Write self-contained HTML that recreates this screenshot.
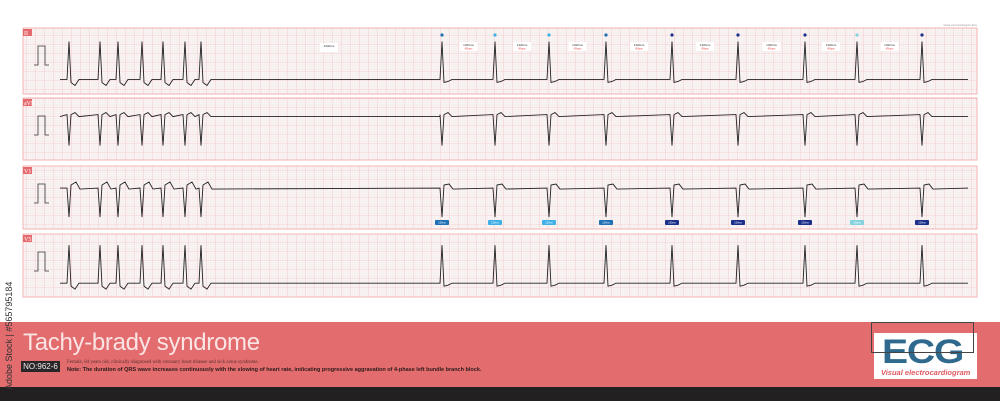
<!DOCTYPE html>
<html><head><meta charset="utf-8"><style>
body{margin:0;width:1000px;height:401px;overflow:hidden;background:#fff;font-family:"Liberation Sans",sans-serif;position:relative}
#ecg{position:absolute;left:0;top:0}
.banner{position:absolute;left:0;top:322px;width:1000px;height:65px;background:#e36c6e}
.dark{position:absolute;left:0;top:387px;width:1000px;height:14px;background:#232021}
.title{position:absolute;left:23px;top:329px;font-size:24px;color:#fbe4e4;letter-spacing:-0.3px}
.no{position:absolute;left:21px;top:361px;width:39px;height:11px;background:#2a2526;color:#eee;font-size:8px;line-height:11px;text-align:center}
.t1{position:absolute;left:67px;top:360px;font-size:5px;color:#5a3030;font-family:"Liberation Serif",serif}
.t2{position:absolute;left:67px;top:367px;font-size:5.5px;color:#2a1a1a;font-weight:bold}
.logo{position:absolute;left:874px;top:333px;width:103px;height:46px;background:#fff}
.logo .e{position:absolute;left:8px;top:2px;font-size:34px;font-weight:bold;color:#2f6a8e;line-height:34px;transform:scaleX(1.15);transform-origin:0 0;letter-spacing:-1px}
.logo .v{position:absolute;left:7px;top:35px;font-size:7.5px;color:#e05a60;font-style:italic;font-weight:bold}
.frame{position:absolute;left:871px;top:322px;width:101px;height:29px;border:1px solid #444}
.side{position:absolute;left:4px;top:390px;transform-origin:0 0;transform:rotate(-90deg);font-size:9px;color:#333;white-space:nowrap;z-index:5}
</style></head><body>
<svg id="ecg" width="1000" height="320" xmlns="http://www.w3.org/2000/svg"></svg>
<div class="banner"></div><div class="dark"></div>
<div class="title">Tachy-brady syndrome</div>
<div class="no">NO:962-6</div>
<div class="t1">Female, 84 years old, clinically diagnosed with coronary heart disease and sick sinus syndrome.</div>
<div class="t2">Note: The duration of QRS wave increases continuously with the slowing of heart rate, indicating progressive aggravation of 4-phase left bundle branch block.</div>
<div class="logo"><div class="e">ECG</div><div class="v">Visual electrocardiogram</div></div>
<div class="frame"></div>
<div class="side">Adobe Stock | #565795184</div>
<script>
var s=document.getElementById('ecg'),h='';
h+='<defs><pattern id="sm" width="1.8" height="1.8" patternUnits="userSpaceOnUse"><path d="M1.8 0V1.8H0" fill="none" stroke="#f6dede" stroke-width="0.4"/></pattern><pattern id="lg" width="9" height="9" patternUnits="userSpaceOnUse"><path d="M9 0V9H0" fill="none" stroke="#f2b4b4" stroke-width="0.6"/></pattern></defs>';
var strips=[[28,66,'II'],[98,62,'aVR'],[166,63,'V1'],[234,63,'V5']];
var tachy=[69,100,118,142,163,185,201],brady=[442,495,549,606,672,738,805,857,922];
strips.forEach(function(st,i){var y=st[0],H=st[1];
h+='<rect x="23" y="'+y+'" width="954" height="'+H+'" fill="#f8f6f6"/><rect x="23" y="'+y+'" width="954" height="'+H+'" fill="url(#sm)"/><rect x="23" y="'+y+'" width="954" height="'+H+'" fill="url(#lg)" stroke="#f2b4b4"/>';
h+='<rect x="23" y="'+(y+1)+'" width="9" height="7" fill="#e56a6e"/><text x="24" y="'+(y+7)+'" font-size="6" fill="#fff" font-family="Liberation Serif">'+st[2]+'</text>';
var b=y+H*0.78; if(i==1)b=y+H*0.3;if(i==2)b=y+H*0.35;
h+='<path d="M34 '+(y+37)+'h4v-19h7v19h4" fill="none" stroke="#333" stroke-width="0.8"/>';
var d='M60 '+b,amp=(i==1||i==2)?29:38;
function beat(x,big){ if(i==0||i==3){d+=' L'+(x-2)+' '+b+' L'+x+' '+(b-amp)+' L'+(x+2)+' '+(b+3)+' L'+(x+6)+' '+(b+(big?6:2))+' L'+(x+10)+' '+b;}
 else if(i==1){d+=' L'+(x-2)+' '+(b-2)+' L'+x+' '+(b+amp)+' L'+(x+2)+' '+(b-2)+' L'+(x+6)+' '+(b-4)+' L'+(x+10)+' '+b;}
 else {d+=' L'+(x-2)+' '+b+' L'+x+' '+(b+amp)+' L'+(x+2)+' '+(b-3)+' L'+(x+7)+' '+(b-(big?6:4))+' L'+(x+11)+' '+(b+1);}}
tachy.forEach(function(x){beat(x,1)});
d+=' L440 '+b;
brady.forEach(function(x){beat(x,0)});
d+=' L968 '+b;
h+='<path d="'+d+'" fill="none" stroke="#222" stroke-width="0.9"/>';
});
var cols=['#1f6fb5','#3fb0e6','#3fb0e6','#1f6fb5','#1a2f8a','#1a2f8a','#1a2f8a','#86d3e0','#1a2f8a'];
brady.forEach(function(x,k){h+='<circle cx="'+x+'" cy="35" r="1.6" fill="'+cols[k]+'"/>';
h+='<rect x="'+(x-7)+'" y="220" width="14" height="5" rx="1" fill="'+cols[k]+'"/><text x="'+x+'" y="223.6" font-size="2.5" text-anchor="middle" fill="#fff">130ms</text>';
if(k<8){var m=(x+brady[k+1])/2;h+='<rect x="'+(m-9)+'" y="42" width="18" height="9" fill="#fff"/><text x="'+m+'" y="46" font-size="3" text-anchor="middle" fill="#333">1320ms</text><text x="'+m+'" y="49.5" font-size="2.5" text-anchor="middle" fill="#e44">45bpm</text>';}});
h+='<rect x="320" y="43" width="18" height="9" fill="#fff"/><text x="329" y="47" font-size="3" text-anchor="middle" fill="#333">3200ms</text>';
h+='<text x="977" y="26" font-size="2.5" text-anchor="end" fill="#999">Visual electrocardiogram  ECG</text>';
s.innerHTML=h;
</script>
</body></html>
